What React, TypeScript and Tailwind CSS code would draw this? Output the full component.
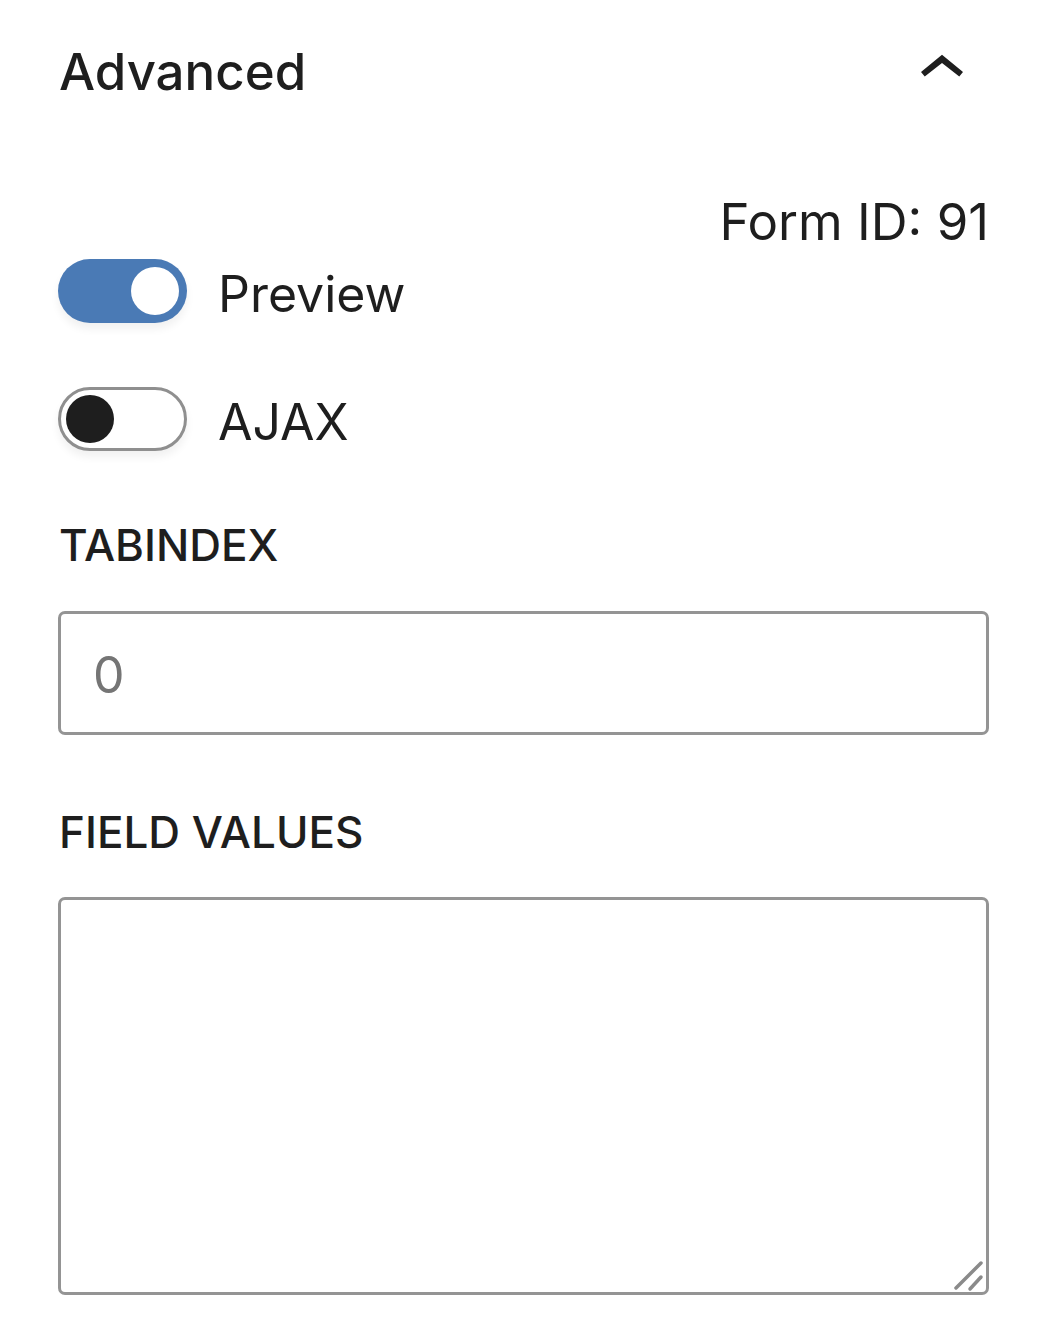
import { useState } from 'react';

type ToggleRowProps = {
  label: string;
  checked: boolean;
  onChange: (v: boolean) => void;
};

// 블록 설정 토글
const ToggleRow = ({ label, checked, onChange }: ToggleRowProps) => {
  return (
    <label className="flex items-center gap-[31px] cursor-pointer select-none">
      <button
        type="button"
        role="switch"
        aria-checked={checked}
        onClick={() => onChange(!checked)}
        className={
          checked
            ? 'flex items-center justify-end w-[129px] h-[64px] rounded-full bg-[#4a7ab5] px-[8px] shadow-[0_6px_8px_rgba(0,0,0,0.06)]'
            : 'flex items-center justify-start w-[129px] h-[64px] rounded-full bg-white border-[3.5px] border-[#8f8f8f] px-[4.5px] shadow-[0_6px_8px_rgba(0,0,0,0.06)]'
        }
      >
        <span
          className={
            checked
              ? 'block w-[48px] h-[48px] rounded-full bg-white'
              : 'block w-[48px] h-[48px] rounded-full bg-[#1e1e1e]'
          }
        />
      </button>
      <span className="mt-[5px] text-[50px] leading-none text-[#1e1e1e]">{label}</span>
    </label>
  );
};

const App = () => {
  const [preview, setPreview] = useState(true);
  const [ajax, setAjax] = useState(false);

  return (
    <div
      className="min-h-screen bg-white pl-[58px] pr-[61px] pt-[25px] text-[#1e1e1e]"
      style={{ fontFamily: 'Inter, "Noto Sans", "Liberation Sans", sans-serif' }}
    >
      {/* 패널 헤더 */}
      <div className="flex justify-between items-start h-[90px]">
        <h2 className="mt-[21px] ml-[1px] text-[51px] leading-none font-medium">Advanced</h2>
        <svg
          width="90"
          height="90"
          viewBox="0 0 24 24"
          className="mr-[2px]"
          aria-hidden="true"
        >
          <path
            d="M6.4 12.5L12 7.9l5.6 4.6-1 1.2L12 10.1l-4.6 3.6-1-1.2z"
            fill="#1e1e1e"
          />
        </svg>
      </div>

      <p className="mt-[81px] text-right text-[51px] leading-none">Form ID: 91</p>

      <div className="mt-[12px] flex flex-col gap-[64px]">
        <ToggleRow label="Preview" checked={preview} onChange={setPreview} />
        <ToggleRow label="AJAX" checked={ajax} onChange={setAjax} />
      </div>

      <div className="mt-[72px] ml-[1px] text-[44px] leading-none font-medium uppercase">Tabindex</div>
      <input
        type="number"
        placeholder="0"
        className="mt-[44px] block w-full h-[124px] rounded-[7px] border-[3.5px] border-[#949494] bg-white pl-[32px] pt-[4px] text-[50px] leading-none text-[#1e1e1e] placeholder:text-[#757575] outline-none"
        style={{ fontFamily: 'Inter, "Noto Sans", "Liberation Sans", sans-serif' }}
      />

      <div className="mt-[75px] ml-[1px] text-[44px] leading-none font-medium uppercase">Field Values</div>
      <div className="relative mt-[43px]">
        <textarea
          className="block w-full h-[398px] rounded-[7px] border-[3.5px] border-[#949494] bg-white p-[30px] text-[50px] leading-tight resize-none outline-none"
          style={{ fontFamily: 'Inter, "Noto Sans", "Liberation Sans", sans-serif' }}
        />
        {/* 리사이즈 핸들 */}
        <svg
          width="39"
          height="38"
          viewBox="0 0 39 38"
          className="absolute right-0 bottom-0 pointer-events-none"
          aria-hidden="true"
        >
          <line x1="6" y1="31" x2="31" y2="6" stroke="#8a8a8a" strokeWidth="3.5" strokeLinecap="round" />
          <line x1="20" y1="32" x2="31" y2="20" stroke="#8a8a8a" strokeWidth="3.5" strokeLinecap="round" />
        </svg>
      </div>
    </div>
  );
};

export default App;
